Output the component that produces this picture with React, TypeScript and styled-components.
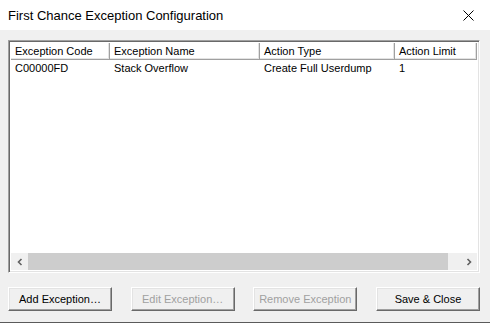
import React from "react";
import styled, { createGlobalStyle } from "styled-components";

const Global = createGlobalStyle`
  html, body { margin: 0; padding: 0; background: #f0f0f0; }
  body { font-family: "Liberation Sans", Arial, sans-serif; }
`;

const Window = styled.div`
  width: 490px;
  height: 323px;
  display: flex;
  flex-direction: column;
  background: #f0f0f0;
  box-sizing: border-box;
  border-bottom: 1px solid #5a5a5a;
  overflow: hidden;
`;

const TitleBar = styled.div`
  height: 30px;
  flex: none;
  background: #ffffff;
  display: flex;
  align-items: center;
  justify-content: space-between;
  padding: 0 16px 0 8px;
  font-size: 13px;
  color: #000;
`;

const CloseIcon = styled.svg`
  width: 11px;
  height: 11px;
`;

const Body = styled.div`
  flex: 1;
  display: flex;
  flex-direction: column;
  padding: 10px 10px 0 8px;
`;

const ListView = styled.div`
  height: 233px;
  box-sizing: border-box;
  border-top: 1px solid #a0a0a0;
  border-left: 1px solid #a0a0a0;
  border-right: 1px solid #ffffff;
  border-bottom: 1px solid #ffffff;
  box-shadow: inset 1px 1px 0 #696969, inset -1px -1px 0 #e3e3e3;
  background: #fff;
  padding: 2px;
  display: flex;
  flex-direction: column;
  font-size: 11px;
`;

const Grid = styled.div`
  flex: 1;
  display: grid;
  grid-template-columns: 99px 150px 135px 1fr;
  grid-auto-rows: min-content;
`;

const HeaderCell = styled.div`
  height: 17px;
  box-sizing: border-box;
  padding: 2px 0 0 4px;
  background: #ffffff;
  border-right: 1px solid #a0a0a0;
  border-bottom: 1px solid #a0a0a0;
  box-shadow: inset -1px -1px 0 #e3e3e3;
  white-space: nowrap;
`;

const Cell = styled.div`
  height: 16px;
  padding: 2px 0 0 4px;
  white-space: nowrap;
`;

const ScrollBar = styled.div`
  height: 17px;
  display: flex;
  background: #f0f0f0;
`;

const Arrow = styled.div`
  width: 17px;
  display: flex;
  align-items: center;
  justify-content: center;
`;

const Track = styled.div`
  flex: 1;
  display: flex;
`;

const Thumb = styled.div`
  flex: 1;
  background: #cdcdcd;
  margin-right: 12px;
`;

const ButtonRow = styled.div`
  display: flex;
  justify-content: space-between;
  margin-top: 14px;
`;

const Button = styled.div<{ $disabled?: boolean }>`
  width: 104px;
  height: 24px;
  box-sizing: border-box;
  display: flex;
  align-items: center;
  justify-content: center;
  font-size: 11px;
  color: ${(p) => (p.$disabled ? "#a0a0a0" : "#000")};
  border-top: 1px solid #ffffff;
  border-left: 1px solid #ffffff;
  border-right: 1px solid #696969;
  border-bottom: 1px solid #696969;
  box-shadow: inset -1px -1px 0 #a0a0a0, inset 1px 1px 0 #e3e3e3;
  background: #f0f0f0;
`;

const Chevron = ({ dir }: { dir: "l" | "r" }) => (
  <svg width="8" height="8" viewBox="0 0 8 8">
    <path
      d={dir === "l" ? "M5.5 1 L2.5 4 L5.5 7" : "M2.5 1 L5.5 4 L2.5 7"}
      fill="none"
      stroke="#606060"
      strokeWidth="1.6"
    />
  </svg>
);

export default function App() {
  return (
    <>
      <Global />
      <Window>
        <TitleBar>
          <span>First Chance Exception Configuration</span>
          <CloseIcon viewBox="0 0 11 11">
            <path d="M0.5 0.5 L10.5 10.5 M10.5 0.5 L0.5 10.5" stroke="#000" strokeWidth="1" />
          </CloseIcon>
        </TitleBar>
        <Body>
          <ListView>
            <Grid>
              <HeaderCell>Exception Code</HeaderCell>
              <HeaderCell>Exception Name</HeaderCell>
              <HeaderCell>Action Type</HeaderCell>
              <HeaderCell>Action Limit</HeaderCell>
              <Cell>C00000FD</Cell>
              <Cell>Stack Overflow</Cell>
              <Cell>Create Full Userdump</Cell>
              <Cell>1</Cell>
            </Grid>
            <ScrollBar>
              <Arrow>
                <Chevron dir="l" />
              </Arrow>
              <Track>
                <Thumb />
              </Track>
              <Arrow>
                <Chevron dir="r" />
              </Arrow>
            </ScrollBar>
          </ListView>
          <ButtonRow>
            <Button>Add Exception…</Button>
            <Button $disabled>Edit Exception…</Button>
            <Button $disabled>Remove Exception</Button>
            <Button>Save &amp; Close</Button>
          </ButtonRow>
        </Body>
      </Window>
    </>
  );
}
